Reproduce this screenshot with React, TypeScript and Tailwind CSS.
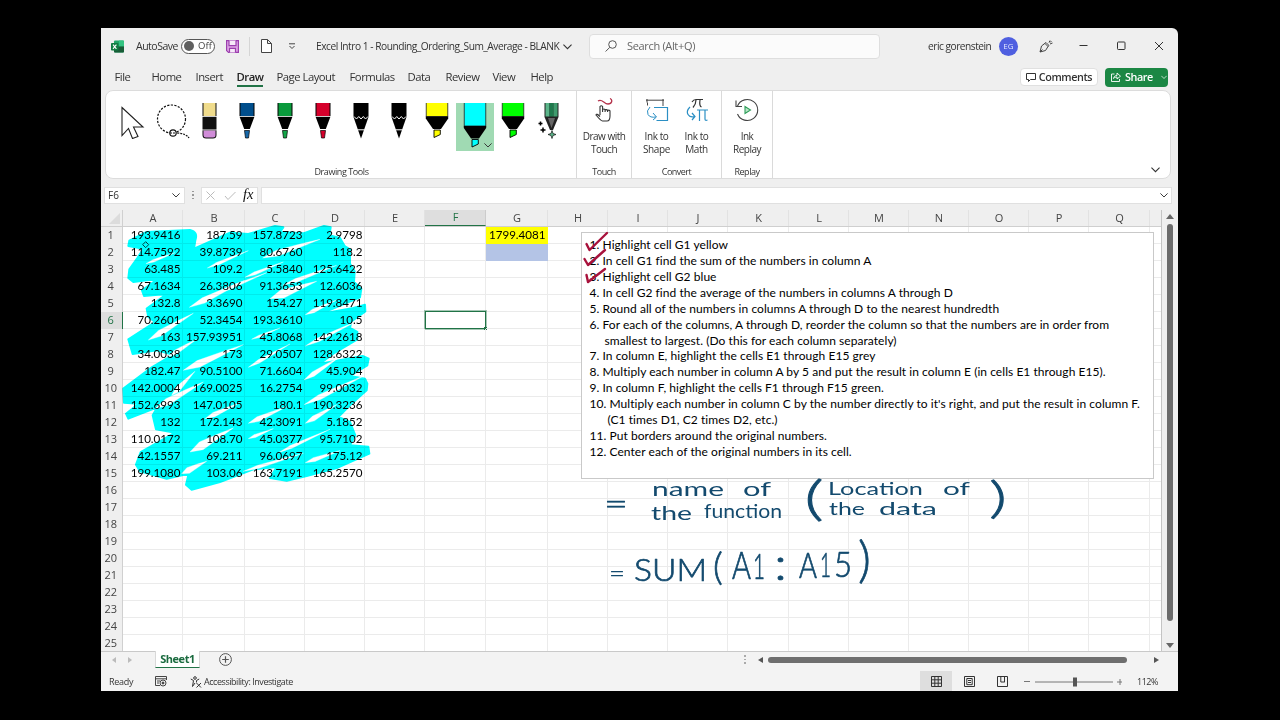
import type { ReactNode } from "react";

const tabs = [
  { label: "File", box: "w-[37px]" },
  { label: "Home", box: "w-[44px]" },
  { label: "Insert", box: "w-[41px]" },
  { label: "Draw", box: "w-[40px]", active: true },
  { label: "Page Layout", box: "w-[73px]" },
  { label: "Formulas", box: "w-[58px]" },
  { label: "Data", box: "w-[38px]" },
  { label: "Review", box: "w-[47px]" },
  { label: "View", box: "w-[38px]" },
  { label: "Help", box: "w-[36px]" },
];

const columns = [
  { name: "A", width: "w-[60px]" },
  { name: "B", width: "w-[62px]" },
  { name: "C", width: "w-[60px]" },
  { name: "D", width: "w-[60px]" },
  { name: "E", width: "w-[60px]" },
  { name: "F", width: "w-[61px]" },
  { name: "G", width: "w-[62px]" },
  { name: "H", width: "w-[60px]" },
  { name: "I", width: "w-[60px]" },
  { name: "J", width: "w-[60px]" },
  { name: "K", width: "w-[61px]" },
  { name: "L", width: "w-[60px]" },
  { name: "M", width: "w-[60px]" },
  { name: "N", width: "w-[60px]" },
  { name: "O", width: "w-[60px]" },
  { name: "P", width: "w-[60px]" },
  { name: "Q", width: "w-[61px]" },
];

const data = [
  ["193.9416", "187.59", "157.8723", "2.9798"],
  ["114.7592", "39.8739", "80.6760", "118.2"],
  ["63.485", "109.2", "5.5840", "125.6422"],
  ["67.1634", "26.3806", "91.3653", "12.6036"],
  ["132.8", "3.3690", "154.27", "119.8471"],
  ["70.2601", "52.3454", "193.3610", "10.5"],
  ["163", "157.93951", "45.8068", "142.2618"],
  ["34.0038", "173", "29.0507", "128.6322"],
  ["182.47", "90.5100", "71.6604", "45.904"],
  ["142.0004", "169.0025", "16.2754", "99.0032"],
  ["152.6993", "147.0105", "180.1", "190.3236"],
  ["132", "172.143", "42.3091", "5.1852"],
  ["110.0172", "108.70", "45.0377", "95.7102"],
  ["42.1557", "69.211", "96.0697", "175.12"],
  ["199.1080", "103.06", "163.7191", "165.2570"],
];

const rows = Array.from({ length: 25 }, (_, i) => i + 1);

const tasks = [
  { text: "1. Highlight cell G1 yellow" },
  { text: "2. In cell G1 find the sum of the numbers in column A" },
  { text: "3. Highlight cell G2 blue" },
  { text: "4. In cell G2 find the average of the numbers in columns A through D" },
  { text: "5. Round all of the numbers in columns A through D to the nearest hundredth" },
  { text: "6. For each of the columns, A through D, reorder the column so that the numbers are in order from" },
  { text: "smallest to largest. (Do this for each column separately)", indent: "pl-[15px]" },
  { text: "7. In column E, highlight the cells E1 through E15 grey" },
  { text: "8. Multiply each number in column A by 5 and put the result in column E (in cells E1 through E15)." },
  { text: "9. In column F, highlight the cells F1 through F15 green." },
  { text: "10. Multiply each number in column C by the number directly to it's right, and put the result in column F." },
  { text: "(C1 times D1, C2 times D2, etc.)", indent: "pl-[18px]" },
  { text: "11. Put borders around the original numbers." },
  { text: "12. Center each of the original numbers in its cell." },
];

// x1, y1, x2, y2, thickness of each gap left between marker strokes
const gaps = [
  [78, 125, 165, 92, 7],
  [262, 138, 385, 86, 8],
  [428, 108, 600, 52, 16],
  [375, 166, 490, 120, 8],
  [290, 214, 440, 152, 8],
  [208, 256, 375, 175, 15],
  [488, 190, 650, 130, 10],
  [450, 230, 590, 178, 22],
  [556, 278, 650, 234, 10],
  [85, 354, 220, 274, 16],
  [145, 404, 230, 352, 12],
  [190, 445, 370, 368, 18],
  [395, 352, 480, 318, 6],
  [385, 436, 510, 366, 9],
  [556, 372, 710, 298, 10],
  [552, 474, 660, 404, 12],
  [155, 520, 225, 448, 15],
  [105, 560, 250, 480, 18],
  [255, 590, 360, 542, 12],
  [385, 604, 500, 554, 13],
  [552, 548, 735, 460, 13],
  [556, 604, 650, 548, 13],
  [210, 690, 340, 618, 22],
  [385, 650, 460, 620, 8],
  [475, 692, 630, 622, 8],
  [370, 748, 550, 694, 9],
  [556, 722, 660, 686, 11],
  [185, 755, 260, 718, 16],
];

function gapPath([x1, y1, x2, y2, t]: number[]) {
  const mx = x1 + (x2 - x1) * 0.25;
  const my = y1 + (y2 - y1) * 0.25;
  return `M${x1} ${y1}L${mx - t * 0.2} ${my - t * 0.55}Q${(mx + x2) / 2} ${(my + y2) / 2 - t * 0.4} ${x2} ${y2}L${mx + t * 0.3} ${my + t * 0.5}Z`;
}

function Chevron({ className = "h-2 w-2" }: { className?: string }) {
  return (
    <svg className={className} viewBox="0 0 10 10" fill="none" stroke="currentColor" strokeWidth="1.2">
      <path d="M.5 3L5 7.500L9.500 3" />
    </svg>
  );
}

function TitleBar() {
  return (
    <div className="flex h-[36px] shrink-0 items-center text-[10.5px]">
      <svg className="ml-[10px] h-[13px] w-[13px] shrink-0" viewBox="0 0 13 13">
        <rect x="3" y="0.5" width="10" height="12" rx="1" fill="#21a366" />
        <path d="M8 .5h4a1 1 0 0 1 1 1V6.500H8z" fill="#33c481" />
        <path d="M3 6.500h10v5a1 1 0 0 1-1 1H4a1 1 0 0 1-1-1z" fill="#185c37" />
        <rect x="0" y="3" width="7.500" height="7.500" rx=".8" fill="#107c41" />
        <path d="M2 4.700L5.400 8.900M5.400 4.700L2 8.900" stroke="#fff" strokeWidth="1.100" />
      </svg>
      <span className="mt-px ml-[12px] w-[45px] whitespace-nowrap tracking-[-0.5px]">AutoSave</span>
      <span className="flex h-[15px] w-[34px] items-center gap-[4px] rounded-full border border-[#555] bg-white pl-[2px] text-[9.500px] text-[#444]">
        <span className="h-[10px] w-[10px] rounded-full bg-[#606060]" />
        Off
      </span>
      <svg className="ml-[11px] h-[13px] w-[13px]" viewBox="0 0 13 13" fill="none" stroke="#9b3fae" strokeWidth="1.200">
        <path d="M.6 .6h11.800v11.800H2.500L.6 10.600z" fill="#dfa6e6" />
        <path d="M3 .6v5h7v-5M3.500 12.400V8.400h6v4" fill="#f7eaf9" />
      </svg>
      <span className="ml-[10px] h-[19px] w-px bg-[#d5d5d5]" />
      <svg className="ml-[11px] h-[14px] w-[11px]" viewBox="0 0 11 14" fill="#fff" stroke="#444">
        <path d="M.5 .5h6l4 4v9H.5zM6.500 .5v4h4" />
      </svg>
      <svg className="ml-[17px] h-[7px] w-[6px]" viewBox="0 0 6 7" fill="none" stroke="#444">
        <path d="M0 .8h6M.5 3L3 5.500L5.500 3" />
      </svg>
      <span className="mt-px ml-[21px] w-[244px] text-[10.2px] tracking-[-0.48px] whitespace-nowrap">
        Excel Intro 1 - Rounding_Ordering_Sum_Average - BLANK
      </span>
      <Chevron className="ml-[3px] h-[9px] w-[9px]" />
      <div className="ml-[17px] flex h-[25px] w-[291px] items-center rounded-sm border border-[#dedede] bg-[#fbfbfb] text-[#666]">
        <svg className="ml-[15px] h-[12px] w-[12px]" viewBox="0 0 12 12" fill="none" stroke="#555">
          <circle cx="7.500" cy="4.500" r="3.800" />
          <path d="M4.800 7.300L.6 11.500" />
        </svg>
        <span className="ml-[10px] text-[11px] tracking-[-0.33px]">Search (Alt+Q)</span>
      </div>
      <span className="mt-px ml-[48px] w-[63px] text-[10.2px] tracking-[-0.5px] whitespace-nowrap">eric gorenstein</span>
      <span className="ml-[8px] flex h-[19px] w-[19px] items-center justify-center rounded-full bg-[#4f5fe0] text-[8px] text-[#dfe4ff]">
        EG
      </span>
      <svg className="ml-[21px] h-[13px] w-[14px]" viewBox="0 0 14 13" fill="none" stroke="#444">
        <path d="M1 12l1.500-6L7 2.500l2.800 2.800L6.500 10.500zM1 12l2.500-2.500M6 3.500l3 3M10 2.500l1-2M11 4l2.500-1M11 2.500L12.500 1" />
      </svg>
      <svg className="ml-[25px] h-[12px] w-[86px]" viewBox="0 0 86 12" fill="none" stroke="#333">
        <path d="M1.500 5.500h8M77 2l8 8M85 2l-8 8" />
        <rect x="39.500" y="2" width="7.500" height="7.500" rx=".8" />
      </svg>
    </div>
  );
}

function TabBar() {
  return (
    <div className="flex h-[26px] shrink-0 items-center pl-[13.500px] text-[11.3px] tracking-[-0.5px]">
      {tabs.map((tab) => (
        <span key={tab.label} className={`${tab.box} mt-px flex justify-start whitespace-nowrap`}>
          <span className={tab.active ? "relative font-semibold text-[#222]" : ""}>
            {tab.label}
            {tab.active && <span className="absolute bottom-[-1px] left-0 h-[2px] w-full bg-[#217346]" />}
          </span>
        </span>
      ))}
      <span className="ml-auto flex h-[18px] w-[78px] items-center justify-center gap-[3px] rounded-sm border border-[#e0e0e0] bg-white text-[10.8px] font-semibold tracking-[-0.4px]">
        <svg className="h-[9px] w-[10px]" viewBox="0 0 10 9" fill="none" stroke="#333">
          <path d="M.5 .5h9v6H4.500L2.500 8.500V6.500h-2z" />
        </svg>
        Comments
      </span>
      <span className="mr-[10px] ml-[7px] flex h-[19px] w-[63px] items-center rounded-sm bg-[#1b8744] pl-[6px] text-[10.8px] font-semibold tracking-[-0.45px] text-white">
        <svg className="mr-[4px] h-[10px] w-[10px]" viewBox="0 0 10 10" fill="none" stroke="#fff" strokeWidth=".9">
          <path d="M3.500 2H.5v7.500h8V7M2.500 6.500c.4-2 1.500-3 3.500-3V1l3.500 3.200L6 7V5c-1.500 0-2.500.4-3.500 1.500z" />
        </svg>
        Share
        <Chevron className="ml-[8px] h-[6px] w-[6px]" />
      </span>
    </div>
  );
}

function Pen({ color, tip }: { color: string; tip: string }) {
  return (
    <svg className="h-[36px] w-[16px]" viewBox="0 0 16 36">
      <path d="M0.500 0h15v13.500L10.800 26H5.200L0.500 13.500z" fill="#000" />
      <rect x="1.500" y="0" width="13" height="13" fill={color} />
      <path d="M0 13.500h16M4 26.800h8" stroke="#fff" strokeWidth=".8" />
      <path d="M5.500 27.500h5L9.500 35h-3z" fill={tip} stroke="#000" strokeWidth=".7" />
    </svg>
  );
}

function Pencil() {
  return (
    <svg className="h-[36px] w-[16px]" viewBox="0 0 16 36">
      <path d="M.5 0h15v14L8 35.500L.5 14z" fill="#000" />
      <path d="M1 13.500l2.500 2.500 2.300-2.500L8 16l2.300-2.500 2.200 2.500 2.500-2.500M4.500 26.800h7" fill="none" stroke="#fff" />
    </svg>
  );
}

function Highlighter({ color, long = false }: { color: string; long?: boolean }) {
  const h = long ? 23 : 13.5;
  return (
    <svg className="h-[46px] w-[24px]" viewBox="0 0 24 46">
      <rect x="1.200" y="-1" width="21.600" height={h + 1} fill={color} stroke="#222" strokeWidth=".8" />
      <path d={`M0.800 ${h}h22.400v2L16 ${h + 12.5}H8L.8 ${h + 2}z`} fill="#000" />
      <path d={`M9 ${h + 13.5}h6.300v4.500L9 ${h + 21}z`} fill={color} stroke="#000" strokeWidth=".9" />
    </svg>
  );
}

function Tool({ children, selected }: { children: ReactNode; selected?: boolean }) {
  return (
    <div className={selected ? "relative flex h-[48px] w-[38px] justify-center bg-[#a0dab3]" : "flex h-[48px] w-[38px] justify-center"}>
      {children}
    </div>
  );
}

function Ribbon() {
  return (
    <div className="mr-[7px] ml-[4px] flex h-[89px] shrink-0 rounded-lg border border-[#dcdcdc] bg-white text-[10px] tracking-[-0.1px]">
      <div className="flex w-[471px] flex-col border-r border-[#dadada]">
        <div className="flex pt-[12px]">
          <svg className="ml-[14px] h-[36px] w-[26px]" viewBox="0 0 26 36" fill="#fff" stroke="#222" strokeWidth="1.100">
            <path d="M2 4.500L23 24H13.500L18 33.500L12.500 35.500L8.500 25.500L2 32.500z" />
          </svg>
          <svg className="ml-[10px] h-[40px] w-[34px]" viewBox="0 0 34 40" fill="none" stroke="#111" strokeWidth="1.200">
            <ellipse cx="15.500" cy="16" rx="14" ry="14" strokeDasharray="2.200 1.400" />
            <circle cx="17" cy="30" r="3.200" fill="#fff" />
            <path d="M14 30h6M21 30q9 .5 12 5" strokeDasharray="2 1" />
          </svg>
          <div className="flex">
            <Tool>
              <svg className="h-[36px] w-[15px]" viewBox="0 0 15 36">
                <path d="M.5 0h14v32q0 3.500-3.500 3.500H4Q.5 35.500 .5 32z" fill="#111" />
                <rect x="1.500" width="12" height="13" fill="#f0dc8c" />
                <path d="M1.500 27.500h12V32q0 2.500-2.500 2.500H4Q1.500 34.500 1.500 32z" fill="#d08cd8" />
                <path d="M0 13.500h15M0 26.900h15" stroke="#fff" strokeWidth=".8" />
              </svg>
            </Tool>
            <Tool><Pen color="#004e8c" tip="#1667a8" /></Tool>
            <Tool><Pen color="#0a9a3c" tip="#13a548" /></Tool>
            <Tool><Pen color="#d5002b" tip="#d5002b" /></Tool>
            <Tool><Pencil /></Tool>
            <Tool><Pencil /></Tool>
            <Tool><Highlighter color="#ffff00" /></Tool>
            <Tool selected>
              <Highlighter color="#00ffff" long />
              <Chevron className="absolute right-[2px] bottom-[2px] h-[8px] w-[8px]" />
            </Tool>
            <Tool><Highlighter color="#00ff00" /></Tool>
            <Tool>
              <svg className="mr-[4px] h-[38px] w-[22px]" viewBox="0 0 22 38">
                <path d="M6.500 0h14v14L15 27h-3L6.500 14z" fill="#222" />
                <path d="M7.500 0h4v13.500h-4z" fill="#5bb58a" />
                <path d="M11.500 0h4v13.500h-4z" fill="#1f7a4d" />
                <path d="M15.500 0h4v13.500h-4z" fill="#3f9c6e" />
                <path d="M10 15l3.500 10L17 15z" fill="#666" />
                <path d="M2.500 18.500v4M.5 20.500h4M5 24.500v5M2.500 27h5" stroke="#000" strokeWidth="1.500" />
                <path d="M14 27.500l1 3 3 1-3 1-1 3-1-3-3-1 3-1z" fill="#5bb58a" stroke="#111" strokeWidth=".7" />
              </svg>
            </Tool>
          </div>
        </div>
        <span className="mt-auto pl-[1px] text-center text-[9px] tracking-[-0.42px]">Drawing Tools</span>
      </div>
      <div className="flex w-[55px] flex-col items-center border-r border-[#dadada] pt-[7px] leading-[12.500px]">
        <svg className="h-[25px] w-[22px]" viewBox="0 0 22 25" fill="none" stroke="#333" strokeWidth="1.100">
          <path d="M5 3c4-3 6 3 10 3s5-4 2-5.500" stroke="#b5344c" strokeWidth="1.300" />
          <path d="M7 17V8.500q1.300-1.600 2.600 0V14v-2.500q1.500-1 2.500 .2V14v-2q1.500-1 2.500 .3V14v-1.500q1.400-.8 2.400 .3V18q0 5-3 5H9.500Q8 23 3 17q.5-2 4 1.500" fill="#fff" />
        </svg>
        <span className="mt-[7px] text-center tracking-[-0.5px] whitespace-nowrap">Draw with<br />Touch</span>
        <span className="mt-auto text-[9px] tracking-[-0.4px]">Touch</span>
      </div>
      <div className="flex w-[90px] flex-col items-center border-r border-[#dadada] pt-[7px] leading-[12.500px]">
        <div className="flex">
          <div className="flex w-[40px] flex-col items-center">
            <svg className="h-[25px] w-[24px]" viewBox="0 0 24 25" fill="none">
              <path d="M2 1v3.500M18 1v7M1 2.200h18M2.500 4.500v3" stroke="#444" />
              <path d="M9 9.500h13.500v13H11.500" stroke="#2b8fc4" strokeWidth="1.200" />
              <path d="M5 9q-4 4-2 7.500t8 2.500M8 15l3.500 4L8 22" stroke="#2b8fc4" />
            </svg>
            <span className="mt-[7px] text-center tracking-[-0.4px]">Ink to<br />Shape</span>
          </div>
          <div className="flex w-[40px] flex-col items-center">
            <svg className="h-[25px] w-[24px]" viewBox="0 0 24 25" fill="none">
              <path d="M7 4q1.500-2.500 4-2.500h7M11 2q0 4-3 7.500M15 2q-1 6 1.500 7" stroke="#333" strokeWidth="1.200" />
              <path d="M5 9q-4 4-2 7.500t7 2M7 15l3 3.500L7 22M12 12h11M14.500 12v11M20 12v9q0 2 2.500 1" stroke="#2b8fc4" strokeWidth="1.200" />
            </svg>
            <span className="mt-[7px] text-center tracking-[-0.4px]">Ink to<br />Math</span>
          </div>
        </div>
        <span className="mt-auto text-[9px] tracking-[-0.5px]">Convert</span>
      </div>
      <div className="flex w-[51px] flex-col items-center border-r border-[#dadada] pt-[7px] leading-[12.500px]">
        <svg className="h-[25px] w-[24px]" viewBox="0 0 24 25" fill="none" stroke="#444" strokeWidth="1.100">
          <path d="M2.500 8A10.500 10.500 0 1 1 2.500 16M1 2.500V8.500H7" />
          <path d="M10 8.500v7l5.500-3.500z" fill="#b7e5c6" stroke="#2f9e59" />
        </svg>
        <span className="mt-[7px] text-center tracking-[-0.5px]">Ink<br />Replay</span>
        <span className="mt-auto text-[9px] tracking-[-0.45px]">Replay</span>
      </div>
      <Chevron className="mt-auto mr-[10px] mb-[4px] ml-auto h-[9px] w-[9px]" />
    </div>
  );
}

function FormulaBar() {
  return (
    <div className="mt-[8px] flex h-[16px] shrink-0 items-center pr-[6px] pl-[3px]">
      <div className="flex h-[17px] w-[81px] items-center justify-between border border-[#e0e0e0] bg-white pr-[4px] pl-[3px] text-[10px]">
        F6
        <Chevron />
      </div>
      <span className="ml-[7px] flex w-[3px] flex-col gap-[2px]">
        <span className="h-[1.500px] w-[1.500px] bg-[#999]" />
        <span className="h-[1.500px] w-[1.500px] bg-[#999]" />
        <span className="h-[1.500px] w-[1.500px] bg-[#999]" />
      </span>
      <div className="ml-[6px] flex h-[17px] w-[57px] items-center border border-[#e0e0e0] bg-white">
        <svg className="ml-[4px] h-[9px] w-[31px]" viewBox="0 0 31 9" fill="none" stroke="#bbb">
          <path d="M.5 .5l8 8M8.500 .5l-8 8M19 5l3 3.500L29.500 1" />
        </svg>
        <span className="ml-[6px] font-['Liberation_Serif',serif] text-[14.5px] text-[#111] italic">fx</span>
      </div>
      <div className="ml-[3px] flex h-[17px] grow items-center justify-end border border-[#e0e0e0] bg-white pr-[3px]">
        <Chevron />
      </div>
    </div>
  );
}

function Cell({ row, name, width, value }: { row: number; name: string; width: string; value?: string }) {
  let fill = "border-[#ebebeb]";
  if (name === "G" && row === 1) fill = "border-[#ffff00] bg-[#ffff00]";
  if (name === "G" && row === 2) fill = "border-[#b4c4e6] bg-[#b4c4e6]";
  return (
    <span
      className={`${width} ${fill} relative flex h-[17px] items-center justify-end border-r border-b pr-[1.500px] font-['Lato',sans-serif] text-[11.600px] text-black`}
    >
      {value}
      {name === "F" && row === 6 && (
        <span className="absolute -top-px -right-px -bottom-px left-0 border border-[#217346] outline-[0.500px] outline-[#217346]/40">
          <span className="absolute -right-[2px] -bottom-[2px] h-[3px] w-[3px] bg-[#217346]" />
        </span>
      )}
    </span>
  );
}

function MarkerLayer() {
  return (
    <svg className="absolute top-[12px] left-[19px] h-[270px] w-[255px] mix-blend-multiply" viewBox="0 0 765 810">
      <path
        d="M28 56L80 30L210 24Q235 30 226 55L222 80L330 32L385 36L465 12L490 16L480 30L550 34L612 12L632 16L628 40L660 48L674 72L690 82L690 125L704 148L702 180L724 200L720 226L600 276L700 258L735 248L736 268L694 298L690 318L712 330L712 352L640 395L600 425L728 402L746 410L742 430L690 462L735 470L742 485L740 505L690 550L655 585L690 600L706 640L690 670L745 674L748 695L650 738L560 762L500 776L450 768L470 735L400 742L300 780L215 803L198 788L206 755L140 770L60 748L48 728L62 690L165 632L108 622L98 580L112 556L25 590L18 575L55 545L12 542L10 500L95 436L160 398L110 385L38 396L25 352L105 300L85 285L80 260L140 216L72 222L66 205L115 170L40 180L25 168L28 142L52 108L70 80L25 72Z"
        fill="#00ffff"
        stroke="#00ffff"
        strokeWidth="6"
        strokeLinejoin="round"
      />
      {gaps.map((gap) => (
        <path key={gap.join()} d={gapPath(gap)} fill="#fff" stroke="#fff" strokeLinejoin="round" />
      ))}
      <path d="M68 68l9-9 9 9-9 9z" fill="none" stroke="#044" strokeWidth="3" />
    </svg>
  );
}

// words without a width keep the font's own proportions
const ink: { text: string; x: number; y: number; w?: number; size: number }[] = [
  { text: "=", x: 604, y: 515, w: 24, size: 32 },
  { text: "name", x: 652, y: 496, w: 72, size: 20 },
  { text: "of", x: 743, y: 496, w: 28, size: 20 },
  { text: "the", x: 651, y: 520, w: 41, size: 19 },
  { text: "function", x: 704, y: 518, w: 78, size: 19 },
  { text: "Location", x: 828, y: 495, w: 95, size: 18 },
  { text: "of", x: 943, y: 495, w: 27, size: 18 },
  { text: "the", x: 829, y: 515, w: 36, size: 17 },
  { text: "data", x: 879, y: 515, w: 58, size: 17 },
  { text: "(", x: 804, y: 515, w: 20, size: 48 },
  { text: ")", x: 989, y: 513, w: 18, size: 44 },
  { text: "=", x: 609, y: 581, w: 16, size: 21 },
  { text: "SUM", x: 634, y: 581, w: 73, size: 31 },
  { text: "(", x: 713, y: 580, size: 38 },
  { text: "A", x: 732, y: 579, w: 19, size: 37 },
  { text: "1", x: 753, y: 579, w: 12, size: 36 },
  { text: ":", x: 774, y: 580, w: 13, size: 46 },
  { text: "A", x: 799, y: 578, w: 18, size: 35 },
  { text: "1", x: 820, y: 577, w: 11, size: 34 },
  { text: "5", x: 834, y: 577, w: 18, size: 35 },
  { text: ")", x: 858, y: 577, size: 50 },
];

function InkLayer() {
  return (
    <svg
      className="absolute top-[240px] left-[499px] h-[170px] w-[420px]"
      viewBox="600 450 420 170"
      fill="#134a6e"
      stroke="#134a6e"
      strokeLinejoin="round"
    >
      {ink.map((word) => (
        <text
          key={`${word.x}-${word.y}`}
          x={word.x}
          y={word.y}
          fontSize={word.size}
          strokeWidth={word.size > 30 ? 0.7 : 0}
          textLength={word.w}
          lengthAdjust="spacingAndGlyphs"
          className={word.size > 30 ? "font-['Lato',sans-serif] font-light" : "font-['Lato',sans-serif]"}
        >
          {word.text}
        </text>
      ))}
    </svg>
  );
}

function TaskBox() {
  return (
    <div className="absolute top-[22px] left-[480px] h-[247px] w-[573px] border border-[#c9c9c9] bg-white pt-[4px] pl-[7.500px] font-['Lato',sans-serif] text-[12px] leading-[15.920px] tracking-[0.05px] text-black">
      {tasks.map((task) => (
        <p key={task.text} className={`whitespace-nowrap ${task.indent ?? ""}`}>
          {task.text}
        </p>
      ))}
      <svg className="absolute top-[-3px] left-0 h-[56px] w-[30px]" viewBox="0 0 30 56" fill="none" stroke="#a8123c" strokeWidth="2.400" strokeLinecap="round" strokeLinejoin="round">
        <path d="M4.500 14l3 6L25 3M2.500 29l3.500 6L23 20M4.500 45l1.500 7L23 39" />
      </svg>
    </div>
  );
}

function Sheet() {
  return (
    <div className="relative mt-[7px] flex h-[441px] shrink-0 overflow-hidden">
      <div className="flex w-[1061px] flex-col overflow-hidden border-r border-[#c4c4c4]">
        <div className="flex h-[17px] shrink-0 border-b border-[#cfcfcf] text-[11px] text-[#444]">
          <span className="flex w-[22px] items-end justify-end border-r border-[#d0d0d0] p-[2px]">
            <span className="h-0 w-0 border-b-[11px] border-l-[11px] border-b-[#dcdcdc] border-l-transparent" />
          </span>
          {columns.map((col) => (
            <span
              key={col.name}
              className={`${col.width} flex items-center justify-center border-r pl-[1px] ${
                col.name === "F" ? "border-b border-r-[#ccc] border-b-[#217346] bg-[#dedede] text-[#217346]" : "border-[#e2e2e2]"
              }`}
            >
              {col.name}
            </span>
          ))}
        </div>
        {rows.map((row) => (
          <div key={row} className="flex h-[17px] shrink-0 bg-white">
            <span
              className={`flex w-[22px] items-center justify-center border-r pr-[1.500px] text-[11px] ${
                row === 6 ? "border-[#217346] bg-[#dedede] text-[#217346]" : "border-[#d0d0d0] bg-[#efefef] text-[#444]"
              }`}
            >
              {row}
            </span>
            {columns.map((col, i) => (
              <Cell
                key={col.name}
                row={row}
                name={col.name}
                width={col.width}
                value={col.name === "G" && row === 1 ? "1799.4081" : data[row - 1]?.[i]}
              />
            ))}
            <span className="grow border-b border-[#ebebeb]" />
          </div>
        ))}
      </div>
      <MarkerLayer />
      <TaskBox />
      <InkLayer />
      <div className="flex grow flex-col items-center justify-between pt-[4px] pb-[3px]">
        <span className="border-x-[4px] border-b-[5px] border-x-transparent border-b-[#666]" />
        <span className="mt-[5px] w-[6px] grow rounded-full bg-[#6b6b6b]" />
        <span className="mt-[22px] border-x-[4px] border-t-[5px] border-x-transparent border-t-[#666]" />
      </div>
    </div>
  );
}

function SheetTabs() {
  return (
    <div className="flex h-[18px] shrink-0 items-center border-t border-[#c9c9c9] bg-[#f3f3f3] pb-[2px]">
      <span className="ml-[11px] border-y-[3px] border-r-[4px] border-y-transparent border-r-[#bbb]" />
      <span className="ml-[12px] border-y-[3px] border-l-[4px] border-y-transparent border-l-[#bbb]" />
      <span className="ml-[23px] flex h-[17px] w-[45px] items-center justify-center border-x border-b border-x-[#d8d8d8] border-b-[#217346] bg-white text-[11px] font-bold tracking-[-0.45px] text-[#1b6b3f]">
        Sheet1
      </span>
      <svg className="ml-[19px] h-[13px] w-[13px]" viewBox="0 0 13 13" fill="none" stroke="#555">
        <circle cx="6.500" cy="6.500" r="5.900" />
        <path d="M6.500 3.200v6.600M3.200 6.500h6.600" strokeWidth="1.200" />
      </svg>
      <span className="ml-[512px] flex flex-col gap-[2px]">
        <span className="h-[1.500px] w-[1.500px] bg-[#aaa]" />
        <span className="h-[1.500px] w-[1.500px] bg-[#aaa]" />
        <span className="h-[1.500px] w-[1.500px] bg-[#aaa]" />
      </span>
      <span className="ml-[12px] border-y-[3.500px] border-r-[5px] border-y-transparent border-r-[#555]" />
      <span className="ml-[5px] h-[6px] w-[359px] rounded-full bg-[#6e6e6e]" />
      <span className="ml-[27px] border-y-[3.500px] border-l-[5px] border-y-transparent border-l-[#555]" />
    </div>
  );
}

function StatusBar() {
  return (
    <div className="flex grow items-center bg-[#f3f3f3] pt-[2px] text-[9px] text-[#333]">
      <span className="ml-[8px] w-[46px] tracking-[-0.3px]">Ready</span>
      <svg className="h-[11px] w-[12px]" viewBox="0 0 12 11" fill="none" stroke="#444">
        <path d="M5 9.500H.5v-9h11V4M.5 2.800h11M2 5h3M2 7h2" />
        <circle cx="8" cy="7" r="3" />
        <circle cx="8" cy="7" r="1" fill="#222" />
      </svg>
      <svg className="ml-[23px] h-[12px] w-[12px]" viewBox="0 0 12 12" fill="none" stroke="#333">
        <circle cx="5" cy="2" r="1.300" />
        <path d="M.8 3l2.700 1.500L2.500 10.500 5 7M9.200 3L6.500 4.500V6.500M6.500 7l4.500 4.500M11 7l-4.500 4.500" />
      </svg>
      <span className="ml-[2px] tracking-[-0.45px]">Accessibility: Investigate</span>
      <span className="ml-auto flex h-[21px] w-[32px] items-center justify-center bg-[#dedede]">
        <svg className="h-[11px] w-[11px]" viewBox="0 0 11 11" fill="none" stroke="#333">
          <path d="M.5 .5h10v10H.5zM.5 3.800h10M.5 7.200h10M3.800 .5v10M7.200 .5v10" />
        </svg>
      </span>
      <svg className="ml-[12px] h-[11px] w-[11px]" viewBox="0 0 11 11" fill="none" stroke="#333">
        <path d="M.5 .5h10v10H.5zM2.800 2.500h5.400v6.200H2.800zM4 4.500h3M4 6.500h3" />
      </svg>
      <svg className="ml-[22px] h-[11px] w-[11px]" viewBox="0 0 11 11" fill="none" stroke="#333">
        <path d="M.5 .5h10v10H.5zM3.800 .5v5.500h4M7.500 .5v5.500" />
      </svg>
      <svg className="ml-[16px] h-[10px] w-[98px]" viewBox="0 0 98 10" fill="none" stroke="#777">
        <path d="M0 4.500h6M11 5h78M93 5h6M96 2v6" />
        <rect x="49" y="0.500" width="4" height="9" fill="#555" stroke="none" />
      </svg>
      <span className="mr-[20px] ml-[15px] w-[21px] tracking-[-0.5px]">112%</span>
    </div>
  );
}

export default function App() {
  return (
    <div className="flex h-[720px] w-[1280px] overflow-hidden bg-black pt-[28px] pl-[101px] font-['Open_Sans',sans-serif] text-[#333]">
      <div className="flex h-[663px] w-[1077px] flex-col overflow-hidden rounded-tr-md bg-[#efefef]">
        <TitleBar />
        <TabBar />
        <Ribbon />
        <FormulaBar />
        <Sheet />
        <SheetTabs />
        <StatusBar />
      </div>
    </div>
  );
}
